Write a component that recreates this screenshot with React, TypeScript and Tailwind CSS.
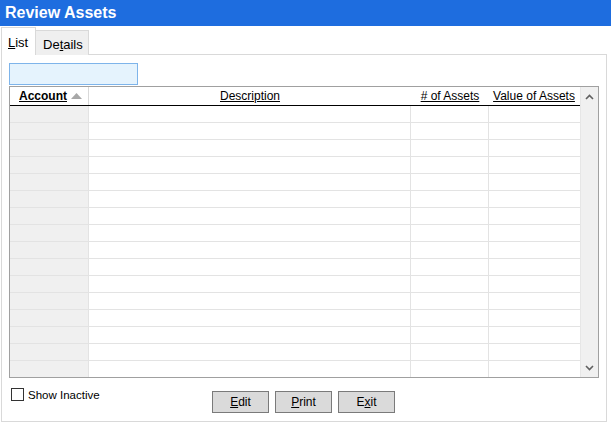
const rows = Array.from({ length: 16 });

function ChevUp() {
  return (
    <svg width="9" height="6" viewBox="0 0 9 6">
      <path d="M1 5 L4.5 1.5 L8 5" fill="none" stroke="#606060" strokeWidth="1.6" />
    </svg>
  );
}

function ChevDown() {
  return (
    <svg width="9" height="6" viewBox="0 0 9 6">
      <path d="M1 1 L4.5 4.5 L8 1" fill="none" stroke="#606060" strokeWidth="1.6" />
    </svg>
  );
}

export default function App() {
  return (
    <div className="w-[611px] h-[423px] bg-white overflow-hidden text-[12px] text-black font-['Liberation_Sans',Arial,sans-serif]">
      <div className="h-[26px] bg-[#1e6ddf] text-white font-bold text-[16px] leading-[26px] pl-[5px]">
        Review Assets
      </div>

      <div className="flex items-end h-[29px] pl-[1px] pt-[2px]">
        <div className="relative z-10 h-[28px] w-[35px] bg-white border border-[#d9d9d9] border-b-0 pl-[6px] pt-[5px] text-[13px]">
          <span className="underline">L</span>ist
        </div>
        <div className="h-[25px] w-[53px] bg-[#efefef] border border-[#d9d9d9] border-l-0 border-b-0 pl-[7px] pt-[4px] text-[13px]">
          De<span className="underline">t</span>ails
        </div>
      </div>

      <div className="-mt-px ml-[1px] w-[606px] h-[368px] border border-[#d9d9d9] px-[7px] pt-[8px]">
        <div className="w-[129px] h-[22px] bg-[#e5f3fd] border border-[#7eb4ea]" />

        <div className="mt-[1px] w-[590px] h-[292px] border border-[#a0a0a0] flex">
          <div className="flex-1 flex flex-col overflow-hidden">
            <div className="flex h-[19px] border-b border-black shrink-0">
              <div className="w-[79px] border-r border-[#d9d9d9] pl-[9px] font-bold flex items-center gap-[4px]">
                <span className="underline">Account</span>
                <svg width="11" height="6" viewBox="0 0 11 6">
                  <path d="M0 6 L5.5 0 L11 6 Z" fill="#a8a8a8" />
                </svg>
              </div>
              <div className="w-[322px] flex items-center justify-center">
                <span className="underline">Description</span>
              </div>
              <div className="w-[78px] flex items-center justify-center">
                <span className="underline">#&nbsp;of Assets</span>
              </div>
              <div className="w-[90px] flex items-center justify-center">
                <span className="underline">Value of Assets</span>
              </div>
            </div>
            {rows.map((_, i) => (
              <div key={i} className="flex h-[17px] shrink-0 border-b border-[#e3e3e3]">
                <div className="w-[79px] bg-[#f0f0f0] border-r border-[#e3e3e3]" />
                <div className="w-[322px] border-r border-[#e3e3e3]" />
                <div className="w-[78px] border-r border-[#e3e3e3]" />
                <div className="w-[90px]" />
              </div>
            ))}
          </div>
          <div className="w-[18px] bg-[#f0f0f0] border-l border-[#e6e6e6] flex flex-col items-center justify-between pt-[7px] pb-[6px]">
            <ChevUp />
            <ChevDown />
          </div>
        </div>

        <div className="flex mt-[10px]">
          <div className="w-[203px] flex items-start pl-[2px]">
            <div className="w-[13px] h-[13px] border border-[#333] bg-white" />
            <span className="ml-[4px] -mt-[1px] text-[11.5px]">Show Inactive</span>
          </div>
          <div className="flex gap-[6px] mt-[3px]">
            <button className="w-[57px] h-[22px] bg-[#dadada] border border-[#7a7a7a]">
              <span className="underline">E</span>dit
            </button>
            <button className="w-[57px] h-[22px] bg-[#dadada] border border-[#7a7a7a]">
              <span className="underline">P</span>rint
            </button>
            <button className="w-[57px] h-[22px] bg-[#dadada] border border-[#7a7a7a]">
              E<span className="underline">x</span>it
            </button>
          </div>
        </div>
      </div>
    </div>
  );
}
